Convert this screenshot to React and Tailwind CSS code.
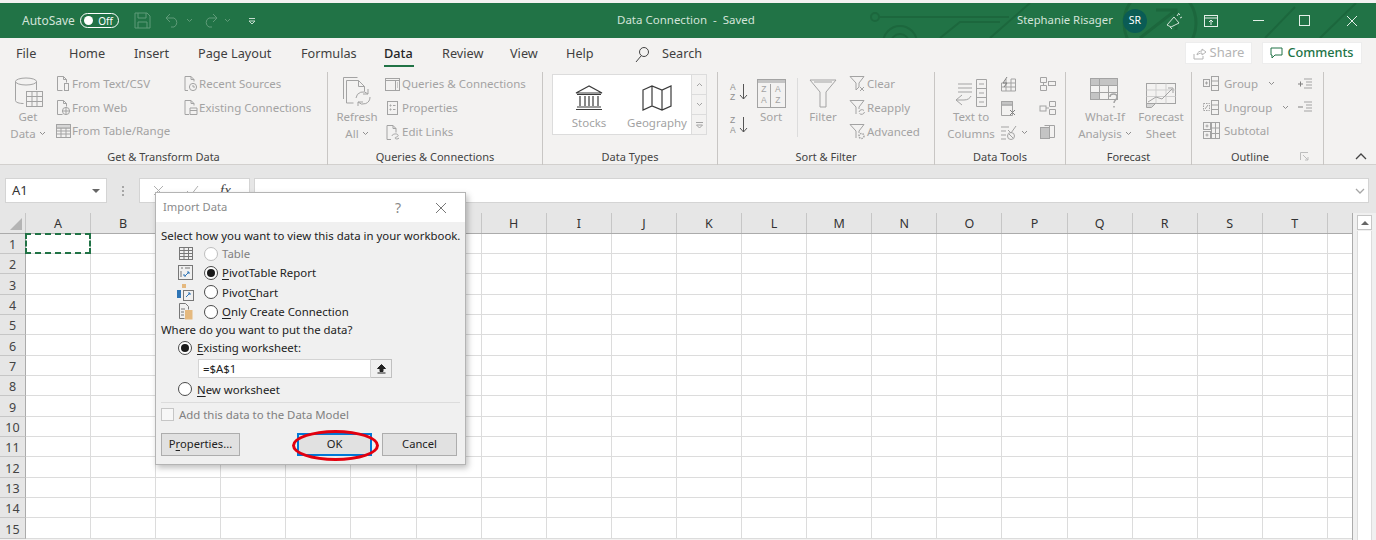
import React from 'react';

const columns = ['A','B','C','D','E','F','G','H','I','J','K','L','M','N','O','P','Q','R','S','T'];
const rows = [1,2,3,4,5,6,7,8,9,10,11,12,13,14,15];
const tabs = [
  ['File', 'w-[53px]'], ['Home', 'w-[65px]'], ['Insert', 'w-[64px]'], ['Page Layout', 'w-[103px]'],
  ['Formulas', 'w-[83px]'], ['Data', 'w-[58px]'], ['Review', 'w-[68px]'], ['View', 'w-[56px]'], ['Help', 'w-[69px]'],
];

function Ic({ w = 16, h = 16, className = 'text-[#a3a3a3]', children }) {
  return (
    <svg width={w} height={h} viewBox={`0 0 ${w} ${h}`} fill="none" stroke="currentColor" strokeWidth="1" className={`shrink-0 ${className}`}>
      {children}
    </svg>
  );
}

const Chevron = ({ className = 'text-[#8f8f8f]' }) => (
  <Ic w={7} h={5} className={className}><path d="M1 1l2.5 2.5L6 1" /></Ic>
);

const icons = {
  textCsv: <Ic w={15} h={17}><path d="M1.5 1.5h6l3 3v3M1.5 1.5v14h5" /><path d="M7.5 1.5v3h3" /><rect x="8.5" y="8.5" width="4" height="7" /></Ic>,
  web: <Ic w={15} h={17}><path d="M1.5 1.5h6l3 3v3M1.5 1.5v14h5M7.5 1.5v3h3" /><circle cx="10" cy="12" r="3.6" /><path d="M6.5 12h7M10 8.5v7" /></Ic>,
  tableRange: <Ic w={16} h={16}><rect x="1.5" y="1.5" width="14" height="13" /><path d="M1.5 5h14M1.5 8h14M1.5 11h14M6 5v10M11 5v10" /><path d="M1.5 1.5h14V5h-14z" fill="#d6d6d6" /></Ic>,
  recent: <Ic w={15} h={17}><path d="M2 1.5h6l3 3v2M2 1.5v14h3M8 1.5v3h3" /><circle cx="10" cy="12" r="3.6" /><path d="M10 10v2h2" /></Ic>,
  existing: <Ic w={15} h={17}><path d="M2 1.5h6l3 3v2M2 1.5v14h4M8 1.5v3h3" /><path d="M7 9h7v6.5H7zM7 11.5h7" /></Ic>,
  queries: <Ic w={15} h={15}><rect x="0.5" y="1.5" width="14" height="12" /><path d="M0.5 3.5h14M10.5 3.5v10M12 6h1M12 8h1M12 10h1" /></Ic>,
  props: <Ic w={13} h={16}><rect x="1.5" y="1.5" width="10" height="13" /><path d="M4 5h1v1H4zM4 9h1v1H4zM7 5.5h2.5M7 9.5h2.5" /></Ic>,
  links: <Ic w={15} h={17}><path d="M2 1.5h6l3 3v4M2 1.5v14h4M8 1.5v3h3" /><path d="M7 12c0-2 5-3 6-1s-3 2-3 3 3 1.500 4 0" /></Ic>,
  clear: <Ic w={17} h={18}><path d="M1 1.500h14L10 8v4l-3 3V8z" /><path d="M11 12l4 4M15 12l-4 4" /></Ic>,
  reapply: <Ic w={17} h={18}><path d="M1 1.500h14L10 8v2M7 15V8L1 1.500" /><path d="M10 13a3 3 0 0 1 5-1.500M15.500 13a3 3 0 0 1-5 1.500" /></Ic>,
  advanced: <Ic w={17} h={18}><path d="M1 1.500h14L10 8v2M7 15V8L1 1.500" /><circle cx="12.500" cy="13" r="2.500" strokeDasharray="1.500 1" strokeWidth="1.500" /></Ic>,
  group: <Ic w={17} h={15}><rect x="0.500" y="3.500" width="6" height="7" /><path d="M2 7h3M3.500 5.500v3" /><rect x="8.500" y="0.500" width="7" height="14" /><path d="M8.500 5h7M8.500 9.500h7" /></Ic>,
  ungroup: <Ic w={17} h={15}><rect x="0.500" y="3.500" width="6" height="7" strokeDasharray="1.500 1" /><path d="M2 9l3-4" /><rect x="8.500" y="0.500" width="7" height="14" /><path d="M8.500 5h7M8.500 9.500h7" /></Ic>,
  subtotal: <Ic w={17} h={17}><rect x="0.500" y="0.500" width="7" height="7" /><path d="M2.500 4h3M4 2.500v3" /><rect x="0.500" y="9.500" width="7" height="7" /><path d="M2.500 13h3M4 11.500v3" /><rect x="8.500" y="0.500" width="8" height="16" /><path d="M8.500 6h8M8.500 11.500h8M12.500 0.500v16" /></Ic>,
};

function Big({ w, icon, lines, chevron }) {
  return (
    <div className={`${w} shrink-0 flex flex-col items-center`}>
      <div className="h-[36px] flex items-end justify-center">{icon}</div>
      {lines.map((line, i) => (
        <div key={line} className="h-[17px] flex items-center gap-[3px] text-[#a3a3a3] whitespace-nowrap">
          {line}
          {chevron && i === lines.length - 1 && <Chevron />}
        </div>
      ))}
    </div>
  );
}

function Small({ icon, text, iconW = 'w-[19px] justify-center', h = 'h-[23.5px]' }) {
  return (
    <div className={`${h} flex items-center whitespace-nowrap text-[#a3a3a3]`}>
      <div className={`${iconW} flex shrink-0`}>{icon}</div>
      {text}
    </div>
  );
}

function Group({ w, label, children, labelPad = '' }) {
  return (
    <div className={`${w} shrink-0 h-[93px] flex flex-col border-r border-[#c8c6c4]`}>
      <div className="h-[77px] flex">{children}</div>
      <div className={`h-[16px] flex items-center justify-center text-[11px] text-[#444] whitespace-nowrap ${labelPad}`}>{label}</div>
    </div>
  );
}

function TitleBar() {
  return (
    <div className="relative h-[35px] mt-[3px] bg-[#217346] flex items-center text-[#d3e3d9] text-[11.5px] overflow-hidden">
      {/* circuit pattern behind the title bar */}
      <svg width="1376" height="35" viewBox="0 0 1376 35" fill="none" stroke="#1c673d" strokeWidth="2" className="absolute left-0 top-0">
        <circle cx="875" cy="14" r="4" />
        <path d="M879 14h130M1030 0l-40 35" />
        <circle cx="900" cy="40" r="17" />
        <circle cx="900" cy="40" r="9" />
        <path d="M940 35l20-16h40" />
        <circle cx="1160" cy="20" r="36" strokeWidth="3" />
        <path d="M1140 35l36-28M1156 7h20v20" strokeWidth="3" />
        <path d="M1265 35l30-31M1320 35l36-35" />
      </svg>
      <div className="relative flex items-center w-full">
        <span className="ml-[22px] w-[58px] text-[12px]">AutoSave</span>
        <div className="w-[39px] h-[15px] rounded-full border border-white flex items-center justify-between px-[3px] text-white text-[10px] leading-none">
          <span className="w-[9px] h-[9px] rounded-full bg-white" />
          <span className="pr-[2px]">Off</span>
        </div>
        <div className="ml-[15px] flex items-center">
          <Ic w={17} h={17} className="text-[#5f9b78]"><path d="M1 1h12l3 3v12H1zM4 1v5h8V1M4 16v-6h9v6" /></Ic>
          <Ic w={15} h={15} className="text-[#5f9b78] ml-[14px]"><path d="M5 1L1 5l4 4M1 5h8a5 5 0 0 1 0 9H6" /></Ic>
          <div className="ml-[6px]"><Chevron className="text-[#5f9b78]" /></div>
          <Ic w={15} h={15} className="text-[#5f9b78] ml-[10px]"><path d="M10 1l4 4-4 4M14 5H6a5 5 0 0 0 0 9h3" /></Ic>
          <div className="ml-[6px]"><Chevron className="text-[#5f9b78]" /></div>
          <Ic w={8} h={8} className="text-[#c6dccf] ml-[17px]"><path d="M1 1.500h6M1 4l3 3 3-3z" /></Ic>
        </div>
        <span className="absolute left-[617px] -mt-px whitespace-nowrap">Data Connection&nbsp; - &nbsp;Saved</span>
        <span className="absolute left-[1017px] whitespace-nowrap text-[11.3px]">Stephanie Risager</span>
        <div className="absolute left-[1123px] w-[24px] h-[24px] rounded-full bg-[#0a5c55] text-white text-[10.5px] flex items-center justify-center">SR</div>
        <div className="absolute left-[1166px]">
          <Ic w={17} h={18} className="text-[#d3e3d9]"><path d="M1 13L8 5l5 6-8 4zM4 15l2 2M11 4l2-3M14 6l2-1M13 3l1-1" /></Ic>
        </div>
        <div className="absolute left-[1204px]">
          <Ic w={14} h={12} className="text-[#e3efe8]"><rect x="0.500" y="0.500" width="13" height="11" /><path d="M0.500 3h13M7 10V5M5 7l2-2 2 2" /></Ic>
        </div>
        <div className="absolute left-[1253px] w-[11px] h-px bg-[#e3efe8]" />
        <div className="absolute left-[1299px] w-[11px] h-[11px] border border-[#e3efe8]" />
        <div className="absolute left-[1346px]">
          <Ic w={12} h={12} className="text-[#e3efe8]"><path d="M1 1l10 10M11 1L1 11" /></Ic>
        </div>
      </div>
    </div>
  );
}

function TabRow() {
  return (
    <div className="h-[30px] pt-[2px] flex items-center pl-[16px] text-[12.7px] text-[#3f3f3f]">
      {tabs.map(([name, w]) => (
        <div key={name} className={`${w} shrink-0 relative`}>
          <span className={name === 'Data' ? 'text-[#262626] font-medium' : ''}>{name}</span>
          {name === 'Data' && <div className="absolute left-0 top-[21px] w-[30px] h-[2px] bg-[#217346]" />}
        </div>
      ))}
      <Ic w={16} h={17} className="text-[#444] ml-[-1px]"><circle cx="10" cy="6" r="4.500" /><path d="M7 10l-5 6" /></Ic>
      <span className="ml-[12px]">Search</span>
      <div className="ml-auto mr-[14px] -mt-[2px] flex items-center gap-[10px]">
        <div className="w-[67px] h-[22px] bg-white border border-[#ededed] flex items-center justify-center gap-[4px] text-[#b4b4b4] text-[13px]">
          <Ic w={13} h={13} className="text-[#b4b4b4]"><path d="M1 7v5h9V9M4 8c0-3 3-4 5-4V2l4 3-4 3V6C7 6 5 7 4 8z" /></Ic>
          Share
        </div>
        <div className="w-[100px] h-[22px] bg-white border border-[#ededed] flex items-center justify-center gap-[4px] text-[#217346] font-medium">
          <Ic w={13} h={12} className="text-[#217346]"><path d="M1 1h11v7H5l-3 3V8H1z" /></Ic>
          Comments
        </div>
      </div>
    </div>
  );
}

function Ribbon() {
  return (
    <div className="h-[97px] pt-[4px] flex text-[11.5px] border-b border-[#d2d0ce]">
      <Group w="w-[328px]" label="Get & Transform Data">
        <div className="ml-[8px] flex">
          <Big w="w-[40px]" chevron lines={['Get', 'Data']} icon={
            <Ic w={29} h={31}><ellipse cx="12" cy="4.500" rx="10.500" ry="3.500" /><path d="M1.500 4.500v19c0 2 4 3 8 3" /><path d="M22.500 4.500V13" /><rect x="12.500" y="14.500" width="16" height="15" fill="#f3f2f1" /><path d="M12.500 19.500h16M12.500 24.500h16M18 14.500v15M23 14.500v15" /></Ic>
          } />
        </div>
        <div className="ml-[3px] w-[131px] shrink-0">
          <Small icon={icons.textCsv} text="From Text/CSV" iconW="w-[21px] justify-end pr-[1px]" />
          <Small icon={icons.web} text="From Web" iconW="w-[21px] justify-end pr-[1px]" />
          <Small icon={icons.tableRange} text="From Table/Range" iconW="w-[21px] justify-end pr-[1px]" />
        </div>
        <div>
          <Small icon={icons.recent} text="Recent Sources" iconW="w-[17px] justify-center" />
          <Small icon={icons.existing} text="Existing Connections" iconW="w-[17px] justify-center" />
        </div>
      </Group>
      <Group w="w-[215px]" label="Queries & Connections">
        <div className="ml-[9px] flex">
          <Big w="w-[40px]" chevron lines={['Refresh', 'All']} icon={
            <Ic w={30} h={32}><path d="M1.500 23V1.500h14M4.500 27V4.500h12l6 6v5M16.500 4.500v6h6M4.500 27h7" /><path d="M14 22a7 7 0 0 1 12-4M28 21a7 7 0 0 1-12 5M26 13v5h-5M16 30v-4h5" /></Ic>
          } />
        </div>
        <div className="ml-[6px]">
          <Small icon={icons.queries} text="Queries & Connections" h="h-[24px]" />
          <Small icon={icons.props} text="Properties" h="h-[24px]" />
          <Small icon={icons.links} text="Edit Links" h="h-[24px]" />
        </div>
      </Group>
      <Group w="w-[175px]" label="Data Types">
        <div className="ml-[9px] mt-[2px] w-[155px] h-[61px] flex border border-[#dcdcdc] bg-white">
          <div className="flex-1 flex">
            <div className="w-[70px] flex flex-col items-center pl-[2px]">
              <div className="h-[36px] flex items-end">
                <Ic w={30} h={26} className="text-[#3a3a3a]"><path d="M15 1L2 8h26zM3 9.500h24M6 11v10M11 11v10M15 11v10M19 11v10M24 11v10M3 22h24M2 24.500h26" strokeWidth="1.200" /></Ic>
              </div>
              <div className="mt-[3px] text-[#a3a3a3]">Stocks</div>
            </div>
            <div className="w-[68px] flex flex-col items-center">
              <div className="h-[36px] flex items-end">
                <Ic w={30} h={26} className="text-[#3a3a3a]"><path d="M1 5l9-4 10 4 9-4v20l-9 4-10-4-9 4zM10 1v20M20 5v20" strokeWidth="1.200" /></Ic>
              </div>
              <div className="mt-[3px] text-[#a3a3a3]">Geography</div>
            </div>
          </div>
          <div className="w-[15px] flex flex-col border-l border-[#dcdcdc] bg-[#f3f2f1] text-[#a3a3a3]">
            <div className="flex-1 flex items-center justify-center border-b border-[#dcdcdc]"><Chevron className="rotate-180 text-[#a3a3a3]" /></div>
            <div className="flex-1 flex items-center justify-center border-b border-[#dcdcdc]"><Chevron className="text-[#a3a3a3]" /></div>
            <div className="flex-1 flex items-center justify-center">
              <Ic w={9} h={8} className="text-[#a3a3a3]"><path d="M1 1.500h7M1.500 4l3 3 3-3z" /></Ic>
            </div>
          </div>
        </div>
      </Group>
      <Group w="w-[217px]" label="Sort & Filter">
        <div className="ml-[12px] mt-[10px] w-[18px] flex flex-col gap-[13px] shrink-0 font-['Liberation_Sans',sans-serif]">
          <div className="relative h-[20px] text-[8.5px] leading-[10px] text-[#8f8f8f]">A<br />Z
            <Ic w={9} h={18} className="text-[#555] absolute left-[9px] top-px"><path d="M4.500 1v15M1 12l3.500 4L8 12" /></Ic>
          </div>
          <div className="relative h-[20px] text-[8.5px] leading-[10px] text-[#8f8f8f]">Z<br />A
            <Ic w={9} h={18} className="text-[#555] absolute left-[9px] top-px"><path d="M4.500 1v15M1 12l3.500 4L8 12" /></Ic>
          </div>
        </div>
        <div className="ml-[7px] flex">
          <div className="w-[32px] flex flex-col items-center">
            <div className="h-[36px] flex items-end justify-center">
              <div className="w-[29px] h-[29px] border border-[#a3a3a3] grid grid-cols-2 text-[8.5px] leading-[10.5px] text-[#a3a3a3] text-center relative pt-[4px] font-['Liberation_Sans',sans-serif]">
                <div className="absolute inset-x-0 top-0 h-[3px] bg-[#c4c4c4]" />
                <div className="border-r border-[#a3a3a3]">Z<br />A</div>
                <div>A<br />Z</div>
              </div>
            </div>
            <div className="h-[17px] flex items-center text-[#a3a3a3]">Sort</div>
          </div>
        </div>
        <div className="ml-[10px] mt-[6px] w-px h-[59px] bg-[#dcdcdc]" />
        <div className="ml-[10px] flex">
          <Big w="w-[30px]" lines={['Filter']} icon={
            <Ic w={28} h={29}><path d="M1 1h26L17 13v15h-6V13z" /><path d="M5 3h18" /></Ic>
          } />
        </div>
        <div className="ml-[9px]">
          <Small icon={icons.clear} text="Clear" h="h-[24px]" iconW="w-[20px] justify-center" />
          <Small icon={icons.reapply} text="Reapply" h="h-[24px]" iconW="w-[20px] justify-center" />
          <Small icon={icons.advanced} text="Advanced" h="h-[24px]" iconW="w-[20px] justify-center" />
        </div>
      </Group>
      <Group w="w-[131px]" label="Data Tools">
        <div className="ml-[10px] flex">
          <Big w="w-[52px]" lines={['Text to', 'Columns']} icon={
            <Ic w={34} h={30}><path d="M4 6h14M4 10h14M4 14h14M22.500 1.500h10v27h-10zM22.500 10.500h10M22.500 19.500h10M25 6h5M25 15h5M25 24h5" /><path d="M8 17l-6 5 6 5M2 22h8c4 0 6-2 7-4" /></Ic>
          } />
        </div>
        <div className="ml-[3px] w-[39px] shrink-0">
          <div className="h-[24px] flex items-center">
            <Ic w={17} h={16}><path d="M1.500 15V7h14v8zM1.500 11h14M6 3v12M11 3v12M11 3h4.500v4" /><path d="M7 1L3 7h4L4 11" stroke="#808080" /></Ic>
          </div>
          <div className="h-[24px] flex items-center">
            <Ic w={17} h={16}><path d="M1.500 1.500h11v14h-11zM1.500 5h11" /><path d="M1.500 1.500h11V5h-11z" fill="#c4c4c4" /><path d="M10 10l5 5M15 10l-5 5" stroke="#808080" /></Ic>
          </div>
          <div className="h-[24px] flex items-center gap-[4px]">
            <Ic w={17} h={16}><path d="M1 3h8M1 7h5M1 11h5M1 15h5M8 6l3 3 5-7" /><circle cx="11" cy="12" r="3.500" /><path d="M9 10l4 4" /></Ic>
            <Chevron />
          </div>
        </div>
        <div>
          <div className="h-[24px] flex items-center">
            <Ic w={17} h={16}><path d="M1.500 1.500h6v5h-6zM1.500 9.500h6v5h-6zM4.500 6.500v3" /><rect x="9.500" y="5.500" width="7" height="4" /></Ic>
          </div>
          <div className="h-[24px] flex items-center">
            <Ic w={17} h={16}><rect x="1" y="6" width="6" height="5" /><path d="M10.500 1.500h6v5h-6zM10.500 9.500h6v5h-6zM7 8h3" /></Ic>
          </div>
          <div className="h-[24px] flex items-center">
            <Ic w={17} h={16}><rect x="1.500" y="3.500" width="9" height="11" fill="#c4c4c4" /><path d="M5.500 1.500h10v12h-5M10.500 1.500v12" /></Ic>
          </div>
        </div>
      </Group>
      <Group w="w-[126px]" label="Forecast">
        <div className="ml-[10px] w-[58px] shrink-0">
          <Big w="w-[58px]" chevron lines={['What-If', 'Analysis']} icon={
            <Ic w={30} h={30} className="text-[#a3a3a3]"><rect x="0.500" y="0.500" width="27" height="21" /><path d="M0.500 7.500h27M0.500 14.500h27M9.500 0.500v21M18.500 0.500v21" /><path d="M0.500 0.500h9v7h-9zM9.500 0.500h18v7h-18zM0.500 14.500h9v7h-9z" fill="#c4c4c4" /><path d="M20 19c0-4 7-4 7 0 0 3-3 3-3 6M24 28v1.500" strokeWidth="1.500" /></Ic>
          } />
        </div>
        <div className="ml-[2px]">
          <Big w="w-[50px]" lines={['Forecast', 'Sheet']} icon={
            <Ic w={30} h={25} className="text-[#a3a3a3]"><rect x="0.500" y="0.500" width="29" height="20" /><path d="M0.500 7h29M0.500 13.500h29M10 0.500v20M20 0.500v20" stroke="#cfcfcf" /><path d="M2 19l8-5 6 2 10-10M22 5h5v5" /><path d="M0.500 20.500h9l-4 4h-5z" fill="#d6d6d6" /></Ic>
          } />
        </div>
      </Group>
      <Group w="w-[132px]" label="Outline" labelPad="pr-[15px]">
        <div className="ml-[11px] w-[94px] shrink-0 relative">
          <Small icon={icons.group} iconW="w-[21px] justify-start" text={<span className="flex items-center gap-[10px]">Group <Chevron /></span>} />
          <Small icon={icons.ungroup} iconW="w-[21px] justify-start" text={<span className="flex items-center gap-[10px]">Ungroup <Chevron /></span>} />
          <Small icon={icons.subtotal} iconW="w-[21px] justify-start" text="Subtotal" />
        </div>
        <div className="text-[#a3a3a3]">
          <div className="h-[23.5px] flex items-center">
            <Ic w={16} h={14}><path d="M1 7h5M3.500 4.500v5" stroke="#808080" /><path d="M7 2h8M9 5h6M9 8h6M7 11h8" /></Ic>
          </div>
          <div className="h-[23.5px] flex items-center">
            <Ic w={16} h={14}><path d="M1 7h5" stroke="#808080" /><path d="M7 2h8M9 5h6M9 8h6M7 11h8" /></Ic>
          </div>
        </div>
        <div className="relative">
          <div className="absolute left-[-13px] top-[80px]">
            <Ic w={9} h={9} className="text-[#bdbdbd]"><path d="M0.500 8V0.500H8M3 3l5 5M5 8h3V5" /></Ic>
          </div>
        </div>
      </Group>
      <div className="flex-1 flex items-end justify-end pr-[9px] pb-[4px]">
        <Ic w={12} h={7} className="text-[#444]"><path d="M1 6l5-5 5 5" strokeWidth="1.300" /></Ic>
      </div>
    </div>
  );
}

function FormulaBar() {
  return (
    <div className="h-[48px] pt-[13px] pl-[5px] flex items-start bg-[#e6e6e6] text-[13px]">
      <div className="w-[102px] h-[25px] bg-white border border-[#d4d4d4] flex items-center justify-between pl-[6px] pr-[6px] text-[#333]">
        A1
        <div className="w-0 h-0 border-x-[4px] border-x-transparent border-t-[4px] border-t-[#666]" />
      </div>
      <div className="w-[32px] h-[25px] flex items-center justify-center">
        <div className="flex flex-col gap-[2px]">
          <span className="w-[2px] h-[2px] bg-[#a6a6a6]" />
          <span className="w-[2px] h-[2px] bg-[#a6a6a6]" />
          <span className="w-[2px] h-[2px] bg-[#a6a6a6]" />
        </div>
      </div>
      <div className="w-[111px] h-[25px] bg-white border border-[#d4d4d4] flex items-center pl-[13px] gap-[22px] text-[#444]">
        <Ic w={11} h={11} className="text-[#b0b0b0]"><path d="M1 1l9 9M10 1l-9 9" /></Ic>
        <Ic w={13} h={11} className="text-[#b0b0b0]"><path d="M1 6l4 4 7-9" /></Ic>
        <span className="font-['Liberation_Serif',serif] italic text-[15px] ml-[-1px]">fx</span>
      </div>
      <div className="ml-[4px] w-[1115px] h-[25px] bg-white border border-[#d4d4d4] flex items-center justify-end pr-[3px]">
        <Ic w={10} h={6} className="text-[#a6a6a6]"><path d="M1 1l4 4 4-4" strokeWidth="1.300" /></Ic>
      </div>
    </div>
  );
}

function Sheet() {
  return (
    <div className="flex-1 flex min-h-0">
      <div className="w-[1353px] shrink-0 flex flex-col border-r border-[#ababab]">
        <div className="h-[21px] shrink-0 grid grid-cols-[26px_repeat(20,65.1px)_1fr] grid-rows-1 bg-[#e6e6e6] border-b border-[#ababab] text-[12.5px] leading-[14px] text-[#333]">
          <div className="border-r border-[#c6c6c6] relative">
            <div className="absolute right-[3px] bottom-[3px] w-0 h-0 border-l-[12px] border-l-transparent border-b-[12px] border-b-[#b4b4b4]" />
          </div>
          {columns.map((c) => (
            <div key={c} className="border-r border-[#c6c6c6] flex items-center justify-center pt-[2px]">{c}</div>
          ))}
          <div />
        </div>
        {rows.map((r) => (
          <div key={r} className={`${r % 3 === 0 ? 'h-[21px]' : 'h-[20px]'} shrink-0 grid grid-cols-[26px_repeat(20,65.1px)_1fr] grid-rows-1 text-[12.5px] leading-[14px] text-[#444]`}>
            <div className="bg-[#e6e6e6] border-r border-[#ababab] border-b border-b-[#c6c6c6] flex items-center justify-center pt-[3px]">{r}</div>
            {columns.map((c) => (
              <div key={c} className="relative bg-white border-r border-b border-[#dcdcdc]">
                {r === 1 && c === 'A' && (
                  <div className="absolute inset-[-1px] border-2 border-dashed border-[#217346]" />
                )}
              </div>
            ))}
            <div className="bg-white border-b border-[#dcdcdc]" />
          </div>
        ))}
      </div>
      <div className="flex-1 bg-[#f0f0f0] pl-[4px] pt-[2px]">
        <div className="w-[15px] h-[15px] bg-white border border-[#c6c6c6] flex items-center justify-center">
          <div className="w-0 h-0 border-x-[4px] border-x-transparent border-b-[4px] border-b-[#666]" />
        </div>
        <div className="w-[15px] h-[320px] bg-white border-x border-[#dcdcdc] mt-[1px]" />
      </div>
    </div>
  );
}

function Radio({ checked, disabled }) {
  return (
    <span className={`w-[14px] h-[14px] shrink-0 rounded-full border ${disabled ? 'border-[#bdbdbd]' : 'border-[#4a4a4a]'} bg-white flex items-center justify-center`}>
      {checked && <span className="w-[8px] h-[8px] rounded-full bg-[#1a1a1a]" />}
    </span>
  );
}

function Option({ icon, checked, disabled, children }) {
  return (
    <div className={`h-[19.3px] flex items-center ${disabled ? 'text-[#808080]' : 'text-[#222]'}`}>
      <div className="w-[36px] pl-[13px] shrink-0 flex justify-center">{icon}</div>
      <div className="ml-[7px]"><Radio checked={checked} disabled={disabled} /></div>
      <span className="ml-[4px]">{children}</span>
    </div>
  );
}

function ImportDialog() {
  return (
    <div className="absolute left-[155px] top-[192px] w-[311px] h-[273px] flex flex-col border border-[#b4b4b4] bg-[#f0f0f0] shadow-[2px_3px_6px_rgba(0,0,0,0.25)] text-[11.4px] text-[#222]">
      <div className="h-[29px] shrink-0 bg-white flex items-center pl-[7px] text-[#8a8a8a] text-[11.2px]">
        Import Data
        <span className="ml-auto text-[#8a8a8a] text-[14px]">?</span>
        <div className="ml-[34px] mr-[18px]">
          <Ic w={12} h={12} className="text-[#777]"><path d="M1 1l10 10M11 1L1 11" /></Ic>
        </div>
      </div>
      <div className="flex-1 px-[5px] pt-[6px] flex flex-col">
        <div className="h-[16px] flex items-center whitespace-nowrap">Select how you want to view this data in your workbook.</div>
        <Option disabled icon={
          <Ic w={14} h={13} className="text-[#777]"><rect x="0.500" y="0.500" width="13" height="12" /><path d="M0.500 3.500h13M0.500 6.500h13M0.500 9.500h13M5 0.500v12M9.500 0.500v12" /></Ic>
        }>Table</Option>
        <Option checked icon={
          <Ic w={15} h={15} className="text-[#777]"><rect x="0.500" y="0.500" width="14" height="14" /><path d="M3 3h2M7 3h5M3 6v6" /><path d="M7 11l4-4M9 7h2v2M6 9v2h2" stroke="#2e75b6" /></Ic>
        }><u className="underline-offset-2">P</u>ivotTable Report</Option>
        <Option icon={
          <Ic w={17} h={17} className="text-[#777]"><rect x="0" y="6" width="4" height="8" fill="#2e75b6" stroke="none" /><rect x="5" y="0" width="4" height="4" fill="#e5b97f" stroke="none" /><rect x="6.500" y="6.500" width="10" height="10" /><path d="M9 13l4-4M11 9h2v2" stroke="#2e75b6" /></Ic>
        }>Pivot<u className="underline-offset-2">C</u>hart</Option>
        <Option icon={
          <Ic w={15} h={17} className="text-[#777]"><path d="M1.500 0.500h6l3 3v3M1.500 0.500v15h5M3 6h4M3 9h3M3 12h3" /><rect x="7" y="7" width="7.500" height="9.500" fill="#e5b97f" stroke="none" /></Ic>
        }><u className="underline-offset-2">O</u>nly Create Connection</Option>
        <div className="h-[17px] flex items-center whitespace-nowrap">Where do you want to put the data?</div>
        <div className="h-[19px] pl-[17px] flex items-center gap-[5px]">
          <Radio checked /><span><u className="underline-offset-2">E</u>xisting worksheet:</span>
        </div>
        <div className="mt-[2px] ml-[37px] h-[19px] flex shrink-0">
          <div className="w-[173px] bg-white border border-[#d4d4d4] flex items-center pl-[4px]">=$A$1</div>
          <div className="w-[21px] bg-[#f0f0f0] border border-l-0 border-[#c0c0c0] flex items-center justify-center">
            <Ic w={11} h={11} className="text-[#222]"><path d="M5.500 1.500L1.500 5.500h2.500v3h3v-3h2.500zM1.500 10h8" fill="#222" /></Ic>
          </div>
        </div>
        <div className="h-[22px] pl-[17px] flex items-center gap-[5px] shrink-0">
          <Radio /><span><u className="underline-offset-2">N</u>ew worksheet</span>
        </div>
        <div className="mt-[2px] h-px bg-[#dcdcdc] shrink-0" />
        <div className="mt-[5px] h-[13px] flex items-center gap-[5px] text-[#808080] shrink-0">
          <span className="w-[13px] h-[13px] bg-[#f7f7f7] border border-[#c6c6c6]" />
          Add this data to the Data Model
        </div>
        <div className="mt-[12px] flex shrink-0 text-[11.2px]">
          <div className="w-[79px] h-[23px] bg-[#e1e1e1] border border-[#adadad] flex items-center justify-center">
            <span>P<u className="underline-offset-2">r</u>operties...</span>
          </div>
          <div className="relative ml-[57px] w-[75px] h-[23px] bg-[#e1e1e1] border-2 border-[#0078d7] flex items-center justify-center">
            OK
            <div className="absolute left-[-7px] top-[-5px] w-[87px] h-[31px] rounded-[50%] border-[3px] border-[#e3000f]" />
          </div>
          <div className="ml-[10px] w-[75px] h-[23px] bg-[#e1e1e1] border border-[#adadad] flex items-center justify-center">Cancel</div>
        </div>
      </div>
    </div>
  );
}

export default function App() {
  return (
    <div className="relative w-[1376px] h-[540px] overflow-hidden flex flex-col bg-[#f3f2f1] font-['Noto_Sans','Open_Sans',sans-serif]">
      <TitleBar />
      <TabRow />
      <Ribbon />
      <FormulaBar />
      <Sheet />
      <ImportDialog />
    </div>
  );
}
